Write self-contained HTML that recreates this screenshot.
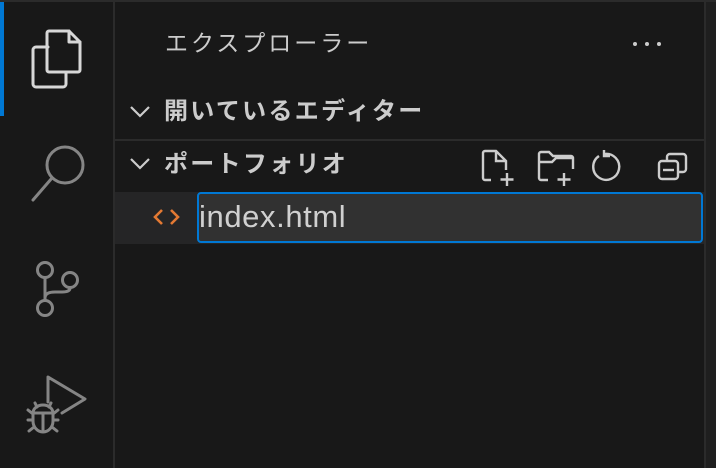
<!DOCTYPE html>
<html><head><meta charset="utf-8"><style>
body{margin:0;width:716px;height:468px;background:#181818;overflow:hidden;position:relative;font-family:"Liberation Sans","Noto Sans CJK JP",sans-serif;}
.abs{position:absolute}
.jp{color:#cccccc;white-space:nowrap}
</style></head><body>
<div class="abs" style="left:0;top:0;width:716px;height:2px;background:#2b2b2b"></div>
<div class="abs" style="left:0;top:2px;width:4px;height:114px;background:#0078d4"></div>
<div class="abs" style="left:113px;top:2px;width:2px;height:466px;background:#2b2b2b"></div>
<div class="abs" style="left:704px;top:2px;width:2px;height:466px;background:#2b2b2b"></div>
<div class="abs" style="left:706px;top:2px;width:10px;height:466px;background:#1f1f1f"></div>
<svg class="abs" style="left:0;top:0" width="113" height="468" fill="none" stroke-linecap="round" stroke-linejoin="round">
 <g stroke="#d7d7d7" stroke-width="3">
  <path d="M48 47 H36 a3 3 0 0 0 -3 3 V84 a3 3 0 0 0 3 3 H63 a3 3 0 0 0 3 -3 V73"/>
  <path d="M50 31 H69 L80 42 V70 a2 2 0 0 1 -2 2 H49 a2 2 0 0 1 -2 -2 V33 a2 2 0 0 1 2 -2 Z"/>
  <path d="M69 31 V42 H80"/>
 </g>
 <g stroke="#858585" stroke-width="3">
  <circle cx="65" cy="165" r="18"/>
  <path d="M52 178 L33 200"/>
  <circle cx="45" cy="270" r="7.5"/><circle cx="45" cy="308" r="7.5"/><circle cx="70" cy="280" r="7.5"/>
  <path d="M45 278 V300 M45 298 Q45 292 55 292 H62 Q70 292 70 288"/>
  <path d="M48 402 V377 L85 399 L62 413"/>
  <path d="M33 413 a10 8 0 0 1 20 0 V421 a10 11 0 0 1 -20 0 Z M33 413 H53 M43 413 V431 M28 410 L33 414 M58 410 L53 414 M28 420 H33 M53 420 H58 M29 431 L34 427 M57 431 L52 427 M37 407 L35 403 M49 407 L51 403"/>
 </g>
</svg>
<div class="abs jp" style="left:165px;top:27px;font-size:23px;letter-spacing:3px;line-height:32px">エクスプローラー</div>
<div class="abs" style="left:633px;top:42px;width:4px;height:4px;border-radius:2px;background:#ccc;box-shadow:12px 0 0 #ccc,24px 0 0 #ccc"></div>
<svg class="abs" style="left:128px;top:100px" width="30" height="80" fill="none" stroke="#cccccc" stroke-width="2.2"><path d="M3 7 L12 16 L21 7"/><path d="M3 59 L12 68 L21 59"/></svg>
<div class="abs jp" style="left:164px;top:95px;font-size:24px;font-weight:bold;letter-spacing:2.3px;line-height:34px">開いているエディター</div>
<div class="abs" style="left:115px;top:139px;width:589px;height:2px;background:#2b2b2b"></div>
<div class="abs jp" style="left:164px;top:148px;font-size:24px;font-weight:bold;letter-spacing:2.3px;line-height:34px">ポートフォリオ</div>
<svg class="abs" style="left:478px;top:146px" width="220" height="42" fill="none" stroke="#cccccc" stroke-width="2.4">
 <path d="M13 34 H7 a2 2 0 0 1 -2 -2 V7 a2 2 0 0 1 2 -2 H18 L28 15 V24 M18 5 V15 H28 M29 27 V40 M22.5 33.5 H35.5"/>
 <path d="M70 34 H63 a2 2 0 0 1 -2 -2 V8 a2 2 0 0 1 2 -2 H71 L75 10 H93 a2 2 0 0 1 2 2 V23 M61 16 H74 L78 12 H95 M86 27 V40 M79.5 33.5 H92.5"/>
 <path d="M126 8 a13 13 0 1 1 -5 2 M126 4 V10 H132"/>
 <rect x="189" y="8" width="19" height="18" rx="3"/><rect x="181" y="15" width="19" height="18" rx="3" fill="#181818"/><path d="M185 24 H196"/>
</svg>
<div class="abs" style="left:115px;top:192px;width:589px;height:52px;background:#252526"></div>
<svg class="abs" style="left:150px;top:204px" width="34" height="30" fill="none" stroke="#e37933" stroke-width="2.6"><path d="M12 6 L5 13 L12 20 M21 6 L28 13 L21 20"/></svg>
<div class="abs" style="left:197px;top:192px;width:502px;height:47px;border:2px solid #0078d4;border-radius:4px;background:#313131"></div>
<div class="abs" style="left:199px;top:199px;font-size:31px;color:#d0d0d0;line-height:36px;letter-spacing:0.6px">index.html</div>
</body></html>
